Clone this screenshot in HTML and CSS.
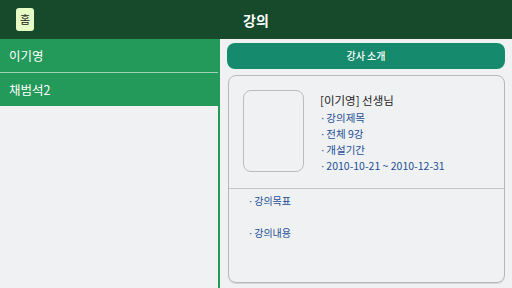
FILE: index.html
```html
<!DOCTYPE html>
<html>
<head>
    <title>강의</title>
    <meta charset="UTF-8">
    <link rel="stylesheet" href="styles.css">
</head>
<body>

<div class="header">
    <button class="home">홈</button>
    <h1>강의</h1>
</div>

<div class="main">
    <div class="sidebar">
        <div class="item">이기영</div>
        <div class="item">채범석2</div>
    </div>

    <div class="content">
        <div class="tab">강사 소개</div>
        <div class="card">
            <div class="profile">
                <div class="photo"></div>
                <div class="info">
                    <p class="name">[이기영] 선생님</p>
                    <p><span class="dot">·</span>강의제목</p>
                    <p><span class="dot">·</span>전체 9강</p>
                    <p><span class="dot">·</span>개설기간</p>
                    <p><span class="dot">·</span>2010-10-21 ~ 2010-12-31</p>
                </div>
            </div>
            <div class="details">
                <p><span class="dot">·</span>강의목표</p>
                <p><span class="dot">·</span>강의내용</p>
            </div>
        </div>
    </div>
</div>

</body>
</html>
```

FILE: styles.css
```css
body {
    margin: 0;
    width: 512px;
    height: 288px;
    overflow: hidden;
    font-family: "Noto Sans CJK KR", "Noto Sans", sans-serif;
    background-color: #f0f1f3;
}

.header {
    height: 39px;
    background-color: #164a2b;
    display: flex;
    align-items: center;
    justify-content: center;
    position: relative;
}

.home {
    position: absolute; /* sits over the centred title bar */
    left: 16px;
    top: 8px;
    width: 18px;
    height: 23px;
    padding: 0;
    border: none;
    border-radius: 3px;
    background-color: #e6fcc4;
    color: #222;
    font-family: inherit;
    font-size: 11px;
    line-height: 23px;
}

h1 {
    margin: 0;
    color: #fff;
    font-size: 14px;
    font-weight: bold;
}

.main {
    display: flex;
    height: 249px;
}

.sidebar {
    width: 218px;
    border-right: 2px solid #23995a;
}

.item {
    height: 33px;
    line-height: 33px;
    padding-left: 9px;
    background-color: #23995a;
    color: #fff;
    font-size: 12.5px;
    border-bottom: 1px solid #9fd3b3;
}

.item:last-child {
    border-bottom: none;
}

.content {
    flex: 1;
    padding: 4px 7px 0 7px;
}

.tab {
    height: 26px;
    line-height: 26px;
    border-radius: 8px;
    background-color: #168a6d;
    color: #fff;
    text-align: center;
    font-size: 10px;
    font-weight: 500;
}

.card {
    margin: 6px 0 0 1px;
    height: 206px;
    border: 1px solid #b8b8b8;
    border-radius: 8px;
    box-shadow: 0 1px 0 #d6d6d6;
}

.profile {
    display: flex;
    padding: 14px 0 14px 14px;
    gap: 16px;
    border-bottom: 1px solid #c6c6c6;
}

.photo {
    width: 59px;
    height: 80px;
    border: 1px solid #bcbcbc;
    border-radius: 8px;
}

.info p {
    margin: 0;
    height: 16px;
    line-height: 16px;
    color: #1b4f96;
    font-size: 10.5px;
}

.info .name {
    height: 20px;
    line-height: 20px;
    color: #222;
    font-size: 11.5px;
}

.dot {
    font-family: "DejaVu Sans", sans-serif;
    margin: 0 2px 0 1px;
}

.details {
    padding: 4px 0 0 19px;
}

.details p {
    margin: 0 0 16px 0;
    height: 16px;
    line-height: 16px;
    color: #1b4f96;
    font-size: 10px;
}
```
